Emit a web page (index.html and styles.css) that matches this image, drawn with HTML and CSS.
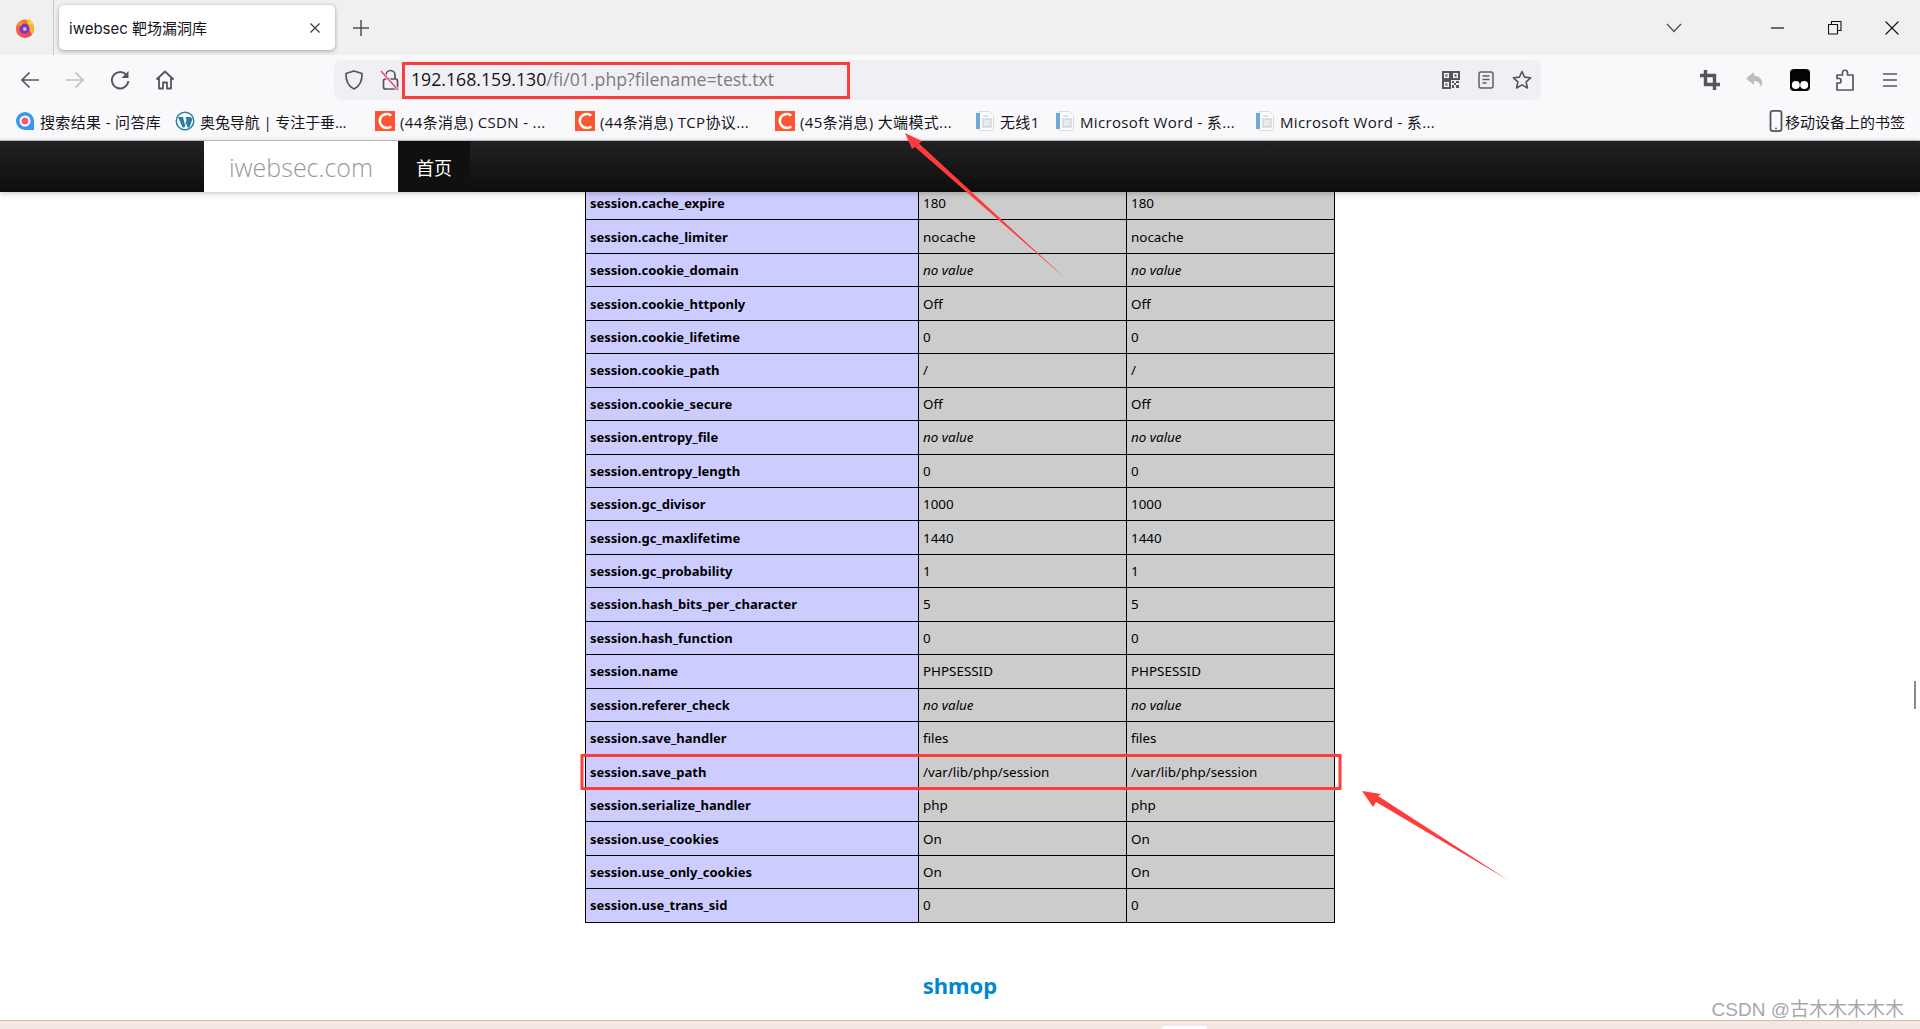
FILE: index.html
```html
<!DOCTYPE html>
<html lang="zh-CN">
<head>
<meta charset="utf-8">
<title>iwebsec 靶场漏洞库</title>
<link rel="stylesheet" href="styles.css">
</head>
<body>
<svg class="defs" width="0" height="0" aria-hidden="true">
  <defs>
    <linearGradient id="ffg" x1="0" y1="0" x2="1" y2="1">
      <stop offset="0" stop-color="#ff7a2f"/>
      <stop offset="1" stop-color="#f0306e"/>
    </linearGradient>
  </defs>
  <symbol id="csdn" viewBox="0 0 20 20">
    <rect width="20" height="20" fill="#fc5531"/>
    <path d="M16 4.600C15 3.500 13.500 3 12 3 8 3 4.800 6 4.800 10s3.200 7 7.200 7c1.500 0 3-.5 4-1.600" fill="none" stroke="#fff" stroke-width="2.600"/>
  </symbol>
  <symbol id="doc" viewBox="0 0 20 20">
    <path d="M3.500 .5h11l4 4v15h-15z" fill="#fbfbfb" stroke="#dcdcdc"/>
    <rect x="1" y="2" width="4" height="16" fill="#6aa9d8"/>
    <rect x="8" y="8" width="8" height="8" fill="#e6ebf0" stroke="#c8c8c8"/>
    <path d="M8 5h5" stroke="#c8c8c8"/>
  </symbol>
</svg>

<header class="tabstrip">
  <div class="ff-wrap">
    <svg class="ff" viewBox="0 0 20 20" width="20" height="20">
      <circle cx="10" cy="10.800" r="9.200" fill="url(#ffg)"/>
      <path d="M11 1.500c4.500 1 8 4.500 8.200 9.300 0 2.400-1 4.500-2.400 6-2.200-4-3.500-10-5.800-15.300z" fill="#ffb52b"/>
      <path d="M13.500 0c2 1 3.500 3 4 5.500l-3.500 .5z" fill="#ffd43c"/>
      <circle cx="9.500" cy="10.800" r="5" fill="#6e3bc6"/>
      <circle cx="9.800" cy="11" r="2" fill="#f6a5b0"/>
      <path d="M1.500 7c2-3 5.500-4 9-3-2.500 .7-3.500 2.200-4 3.800C4.500 7.500 3 8 1.500 7z" fill="#ff8f2e"/>
    </svg>
  </div>
  <div class="tab">
    <span class="tab-title">iwebsec 靶场漏洞库</span>
    <svg class="tab-x" viewBox="0 0 12 12" width="12" height="12"><path d="M1.500 1.500l9 9m0-9l-9 9" stroke="#3a3a42" stroke-width="1.200"/></svg>
  </div>
  <svg class="newtab" viewBox="0 0 16 16" width="16" height="16"><path d="M8 0v16M0 8h16" stroke="#50505a" stroke-width="1.500"/></svg>
  <svg class="chev" viewBox="0 0 16 10" width="16" height="10"><path d="M1 1l7 7.500L15 1" fill="none" stroke="#50505a" stroke-width="1.300"/></svg>
  <div class="win">
    <svg viewBox="0 0 14 14" width="14" height="14"><path d="M0 7h13" stroke="#111" stroke-width="1.200"/></svg>
    <svg viewBox="0 0 14 14" width="14" height="14"><path d="M.5 3.500h9v9.500h-9zM3.500 3.500V.5h9.500v9h-3.500" fill="none" stroke="#111" stroke-width="1.100"/></svg>
    <svg viewBox="0 0 14 14" width="14" height="14"><path d="M.5.5l13 13m0-13l-13 13" stroke="#111" stroke-width="1.100"/></svg>
  </div>
</header>

<nav class="navbar">
  <div class="btn"><svg viewBox="0 0 20 20" width="20" height="20"><path d="M19 10H2M9.500 2.500L2 10l7.500 7.500" fill="none" stroke="#55555f" stroke-width="1.700"/></svg></div>
  <div class="btn"><svg viewBox="0 0 20 20" width="20" height="20"><path d="M1 10h17M10.500 2.500L18 10l-7.500 7.500" fill="none" stroke="#c0c0c4" stroke-width="1.700"/></svg></div>
  <div class="btn"><svg viewBox="0 0 20 20" width="20" height="20"><path d="M16 4.500A8.200 8.200 0 1 0 18.300 11" fill="none" stroke="#55555f" stroke-width="1.900"/><path d="M18.500 1v7h-7z" fill="#55555f"/></svg></div>
  <div class="btn"><svg viewBox="0 0 20 20" width="20" height="20"><path d="M1.500 9.500L10 1.500l8.500 8M4 7.500V18.500h4v-6h4v6h4V7.500" fill="none" stroke="#55555f" stroke-width="1.800" stroke-linejoin="round"/></svg></div>
  <div class="urlbar">
    <svg class="u-shield" viewBox="0 0 20 20" width="20" height="20"><path d="M10 1l8 2.500c.3 7-2 12.500-8 15.500C4 16 1.700 10.500 2 3.500z" fill="none" stroke="#55555f" stroke-width="1.700" stroke-linejoin="round"/></svg>
    <svg class="u-lock" viewBox="0 0 20 22" width="20" height="22"><path d="M6 10V6a4.500 4.500 0 0 1 9 0v4" fill="none" stroke="#55555f" stroke-width="1.700"/><rect x="3.500" y="10" width="14" height="10" rx="2" fill="none" stroke="#55555f" stroke-width="1.700"/><path d="M1 2l17 19" stroke="#f0f0f4" stroke-width="3"/><path d="M1 2l17 19" stroke="#f0466e" stroke-width="1.500"/></svg>
    <div class="u-text"><span class="u-host">192.168.159.130</span>/fi/01.php?filename=test.txt</div>
    <svg class="u-ic" viewBox="0 0 18 18" width="18" height="18"><path d="M1 1h7v7H1zM10 1h7v7h-7zM1 10h7v7H1z" fill="none" stroke="#55555f" stroke-width="2"/><path d="M3.500 3.500h2v2h-2zM12.500 3.500h2v2h-2zM3.500 12.500h2v2h-2zM10 10h2v2h-2zM14 10h3v2h-3zM12 12h2v2h-2zM10 14h2v3h-2zM14 14h3v3h-3z" fill="#55555f"/></svg>
    <svg class="u-ic" viewBox="0 0 18 18" width="18" height="20"><rect x="2" y="1" width="14" height="16" rx="2" fill="none" stroke="#5f5f68" stroke-width="1.500"/><path d="M5.500 5h7M5.500 8.500h7M5.500 12h4" stroke="#5f5f68" stroke-width="1.300"/></svg>
    <svg class="u-ic" viewBox="0 0 20 20" width="20" height="20"><path d="M10 1.500l2.600 5.600 6 .7-4.500 4.100 1.300 6.100-5.400-3.100-5.400 3.100 1.300-6.100L1.400 7.800l6-.7z" fill="none" stroke="#55555f" stroke-width="1.600" stroke-linejoin="round"/></svg>
  </div>
  <div class="tools">
    <div class="btn"><svg viewBox="0 0 20 20" width="20" height="20"><path d="M5.500 0v14.500H20M14.500 20V5.500H0" fill="none" stroke="#55555f" stroke-width="3.400"/></svg></div>
    <div class="btn"><svg viewBox="0 0 20 20" width="20" height="20"><path d="M9 2L1 8.500l8 6.500v-4c4 0 6 2 7 6 2.500-5 1-10.500-7-11.500z" fill="#bdbdc0"/></svg></div>
    <div class="btn"><svg viewBox="0 0 20 22" width="20" height="22"><rect width="20" height="22" rx="4" fill="#050505"/><circle cx="5.800" cy="16" r="4" fill="#fff"/><circle cx="14.200" cy="16" r="4" fill="#fff"/></svg></div>
    <div class="btn"><svg viewBox="0 0 20 22" width="20" height="22"><path d="M2 21v-7h2.500c2 0 2-4.500 0-4.500H2V6h5.500V3.500c0-3 5-3 5 0V6H18v15z" fill="none" stroke="#55555f" stroke-width="1.700" stroke-linejoin="round"/></svg></div>
    <div class="btn"><svg viewBox="0 0 18 16" width="18" height="16"><path d="M2 2h14M2 8h14M2 14h14" stroke="#55555f" stroke-width="1.500"/></svg></div>
  </div>
</nav>

<div class="bookmarks">
  <div class="bm bm-a">
    <svg class="bm-ic" viewBox="0 0 20 20" width="20" height="20"><path d="M10 1a9 9 0 1 0 0 18h9v-9a9 9 0 0 0-9-9z" fill="#3a95f5"/><circle cx="10" cy="10" r="5.500" fill="#fff"/><circle cx="10" cy="10" r="3.500" fill="#f2616a"/></svg>
    <span>搜索结果 - 问答库</span>
  </div>
  <div class="bm bm-b bm-tight">
    <svg class="bm-ic" viewBox="0 0 20 20" width="20" height="20"><circle cx="10" cy="10" r="9.500" fill="#2a7ea6"/><circle cx="10" cy="10" r="8" fill="#fff"/><path d="M3 6h5L10 14l1.500-5-1-3h5l2 2-3 8.500h-2L11 12l-1.500 4.500h-2z" fill="#2a7ea6"/></svg>
    <span>奥兔导航 | 专注于垂...</span>
  </div>
  <div class="bm bm-b"><svg class="bm-ic" width="20" height="20"><use href="#csdn"/></svg><span>(44条消息) CSDN - ...</span></div>
  <div class="bm bm-b"><svg class="bm-ic" width="20" height="20"><use href="#csdn"/></svg><span>(44条消息) TCP协议...</span></div>
  <div class="bm bm-b"><svg class="bm-ic" width="20" height="20"><use href="#csdn"/></svg><span>(45条消息) 大端模式...</span></div>
  <div class="bm bm-c"><svg class="bm-ic" width="20" height="20"><use href="#doc"/></svg><span>无线1</span></div>
  <div class="bm bm-b"><svg class="bm-ic" width="20" height="20"><use href="#doc"/></svg><span>Microsoft Word - 系...</span></div>
  <div class="bm bm-b"><svg class="bm-ic" width="20" height="20"><use href="#doc"/></svg><span>Microsoft Word - 系...</span></div>
  <div class="bm-mobile">
    <svg viewBox="0 0 14 24" width="14" height="22"><rect x="1" y="1" width="12" height="22" rx="2.500" fill="none" stroke="#55555f" stroke-width="2"/><circle cx="7" cy="20" r="1" fill="#55555f"/></svg>
    <span>移动设备上的书签</span>
  </div>
</div>

<div class="site-nav">
  <a class="brand">iwebsec.com</a>
  <a class="nav-item">首页</a>
</div>

<main class="page">
  <table class="info">
    <tr><td class="e">session.cache_expire</td><td class="v">180</td><td class="v">180</td></tr>
    <tr><td class="e">session.cache_limiter</td><td class="v">nocache</td><td class="v">nocache</td></tr>
    <tr><td class="e">session.cookie_domain</td><td class="v"><i>no value</i></td><td class="v"><i>no value</i></td></tr>
    <tr><td class="e">session.cookie_httponly</td><td class="v">Off</td><td class="v">Off</td></tr>
    <tr><td class="e">session.cookie_lifetime</td><td class="v">0</td><td class="v">0</td></tr>
    <tr><td class="e">session.cookie_path</td><td class="v">/</td><td class="v">/</td></tr>
    <tr><td class="e">session.cookie_secure</td><td class="v">Off</td><td class="v">Off</td></tr>
    <tr><td class="e">session.entropy_file</td><td class="v"><i>no value</i></td><td class="v"><i>no value</i></td></tr>
    <tr><td class="e">session.entropy_length</td><td class="v">0</td><td class="v">0</td></tr>
    <tr><td class="e">session.gc_divisor</td><td class="v">1000</td><td class="v">1000</td></tr>
    <tr><td class="e">session.gc_maxlifetime</td><td class="v">1440</td><td class="v">1440</td></tr>
    <tr><td class="e">session.gc_probability</td><td class="v">1</td><td class="v">1</td></tr>
    <tr><td class="e">session.hash_bits_per_character</td><td class="v">5</td><td class="v">5</td></tr>
    <tr><td class="e">session.hash_function</td><td class="v">0</td><td class="v">0</td></tr>
    <tr><td class="e">session.name</td><td class="v">PHPSESSID</td><td class="v">PHPSESSID</td></tr>
    <tr><td class="e">session.referer_check</td><td class="v"><i>no value</i></td><td class="v"><i>no value</i></td></tr>
    <tr><td class="e">session.save_handler</td><td class="v">files</td><td class="v">files</td></tr>
    <tr><td class="e">session.save_path</td><td class="v">/var/lib/php/session</td><td class="v">/var/lib/php/session</td></tr>
    <tr><td class="e">session.serialize_handler</td><td class="v">php</td><td class="v">php</td></tr>
    <tr><td class="e">session.use_cookies</td><td class="v">On</td><td class="v">On</td></tr>
    <tr><td class="e">session.use_only_cookies</td><td class="v">On</td><td class="v">On</td></tr>
    <tr><td class="e">session.use_trans_sid</td><td class="v">0</td><td class="v">0</td></tr>
  </table>
  <h2 class="module">shmop</h2>
</main>

<footer class="strip"><span class="strip-bump"></span></footer>

<svg class="marks" viewBox="0 0 1920 1029" width="1920" height="1029" aria-hidden="true">
  <rect class="mark-box" x="403.500" y="63.500" width="445" height="34"/>
  <rect class="mark-box" x="582" y="755.500" width="758" height="33"/>
  <path class="mark-arrow" d="M905 133L922 141 919 143.500 1066 279 915 147 912 149z"/>
  <path class="mark-arrow" d="M1362 791L1381 794 1378 796 1508 880 1376 802 1373 807z"/>
</svg>
<div class="scroll-mark"></div>
<div class="watermark">CSDN @古木木木木木</div>
</body>
</html>
```
FILE: styles.css
```css
* { box-sizing: border-box; }
html { margin: 0; height: 1029px; overflow: hidden; }
body {
  margin: 0;
  display: flex;
  flex-direction: column;
  height: 1029px;
  overflow: hidden;
  position: relative;
  background: #fff;
  color: #15141a;
  font-family: "Open Sans", "Noto Sans CJK SC", sans-serif;
}
.defs { position: absolute; }

/* tab strip */
.tabstrip {
  height: 55px;
  flex: none;
  background: #f0f0f0;
  display: flex;
  align-items: center;
}
.ff-wrap {
  width: 54px;
  height: 55px;
  border-right: 1px solid #c8c8c8;
  display: flex;
  align-items: center;
  padding-left: 15px;
}
.ff { display: block; }
.tab {
  margin-left: 5px;
  width: 276px;
  height: 45px;
  background: #fff;
  border-radius: 5px;
  box-shadow: 0 1px 4px rgba(0, 0, 0, .35);
  display: flex;
  align-items: center;
  justify-content: space-between;
  padding: 0 14px 0 10px;
}
.tab-title { font-family: Inter, "Noto Sans CJK SC", sans-serif; font-size: 15px; color: #15141a; }
.newtab { margin-left: 18px; }
.chev { margin-left: auto; }
.win {
  width: 226px;
  margin-left: 12px;
  padding: 0 21px 0 0;
  display: flex;
  justify-content: flex-end;
  gap: 43px;
}

/* nav bar */
.navbar {
  height: 45px;
  flex: none;
  background: #f9f9fb;
  display: flex;
  align-items: center;
  padding: 5px 0 0 7px;
}
.btn {
  width: 45px;
  height: 40px;
  display: flex;
  align-items: center;
  justify-content: center;
}
.urlbar {
  margin-left: 147px;
  width: 1207px;
  height: 40px;
  background: #f0f0f4;
  border-radius: 8px;
  display: flex;
  align-items: center;
  padding: 0 9px 0 10px;
}
.u-lock { margin-left: 16px; }
.u-text {
  margin: -2px 0 0 11px;
  flex: 1;
  font-size: 17.700px;
  color: #7b7b82;
  white-space: nowrap;
}
.u-host { color: #15141a; }
.u-ic { margin-left: 17px; }
.tools {
  margin-left: auto;
  margin-right: 8px;
  display: flex;
}

/* bookmarks */
.bookmarks {
  height: 41px;
  flex: none;
  background: #f9f9fb;
  border-bottom: 1px solid #c9c9cb;
  display: flex;
  align-items: center;
  padding: 2px 15px 0;
  font-size: 15px;
  color: #15141a;
}
.bm { display: flex; align-items: center; gap: 5px; white-space: nowrap; flex: none; letter-spacing: .35px; }
.bm-ic { flex: none; }
.bm-a { width: 160px; }
.bm-b { width: 200px; }
.bm-c { width: 80px; }
.bm-tight { letter-spacing: -.1px; }
.bm-mobile {
  margin-left: auto;
  display: flex;
  align-items: center;
  gap: 2px;
  font-size: 15px;
}

/* site nav */
.site-nav {
  height: 51px;
  flex: none;
  background: linear-gradient(#222, #0d0d0d);
  display: flex;
  padding-left: 204px;
  box-shadow: 0 1px 6px rgba(0, 0, 0, .25);
  position: relative;
  z-index: 2;
}
.brand {
  width: 194px;
  background: #fff;
  color: #999;
  font-size: 25px;
  font-weight: 300;
  display: flex;
  align-items: center;
  justify-content: center;
  font-family: "Open Sans", sans-serif;
}
.nav-item {
  width: 72px;
  background: #101010;
  color: #fff;
  font-size: 18px;
  display: flex;
  align-items: center;
  justify-content: center;
}

/* page */
.page { flex: 1; min-height: 0; overflow: hidden; background: #fff; }
.info {
  border-collapse: collapse;
  table-layout: fixed;
  width: 749px;
  margin: -6px auto 0;
  font-family: "Noto Sans", sans-serif;
  font-size: 13.400px;
  color: #000;
}
.info tr { height: 33.450px; }
.info td { border: 1px solid #000; padding: 0 4px; vertical-align: middle; }
.e { width: 333px; background: #ccf; font-weight: 700; font-size: 13px; }
.v { width: 208px; background: #ccc; }
.module {
  margin: 49px 0 0;
  text-align: center;
  color: #0088cc;
  font-family: "Noto Sans", sans-serif;
  font-size: 22px;
  font-weight: 700;
  line-height: 26px;
}

/* bottom strip */
.strip {
  height: 9px;
  flex: none;
  background: #f5e7e1;
  border-top: 1px solid #c9bdb7;
  display: flex;
  align-items: flex-end;
  padding-left: 1162px;
}
.strip-bump { width: 45px; height: 3px; background: #fff; border-radius: 3px 3px 0 0; }

/* overlays */
.marks { position: absolute; left: 0; top: 0; display: block; pointer-events: none; z-index: 5; }
.mark-box { fill: none; stroke: #ff3b3b; stroke-width: 3; }
.mark-arrow { fill: #ff3b3b; }
.scroll-mark { position: absolute; right: 4px; top: 681px; width: 2px; height: 28px; background: #8a8a8a; }
.watermark {
  position: absolute;
  right: 16px;
  top: 999px;
  color: #a8a8a8;
  font-family: "Liberation Sans", "Noto Sans CJK SC", sans-serif;
  font-size: 19px;
  line-height: 22px;
  z-index: 3;
}
```
